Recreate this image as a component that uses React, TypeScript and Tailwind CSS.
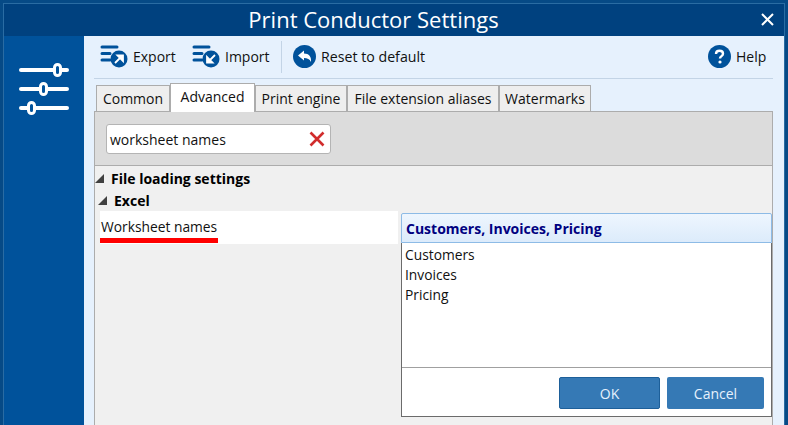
function ListIcon({ dir }: { dir: "out" | "in" }) {
  return (
    <svg width="28" height="23" viewBox="0 0 28 23" className="shrink-0">
      <path d="M2 2H17M2 8.5H10M2 15H10" stroke="#00529b" strokeWidth="3" strokeLinecap="round" fill="none" />
      <circle cx="19" cy="14" r="8.5" fill="#00529b" />
      {dir === "out" ? (
        <path d="M15 18L21.5 11.5M17.5 10.5H23V16Z" stroke="#fff" strokeWidth="1.8" fill="#fff" />
      ) : (
        <path d="M23 10L16.5 16.5M15 12V17.5H20.5Z" stroke="#fff" strokeWidth="1.8" fill="#fff" />
      )}
    </svg>
  );
}

function Slider({ pos }: { pos: number }) {
  return (
    <div className="relative h-[4px] w-[50px] rounded-full bg-white">
      <div
        className="absolute top-[-5px] h-[14px] w-[9px] rounded-full border-[3px] border-white bg-[#00529b]"
        style={{ left: pos }}
      />
    </div>
  );
}

function Tab({ label, width, active }: { label: string; width: string; active?: boolean }) {
  return active ? (
    <div className={`z-10 mb-[-1px] flex h-[29px] items-center justify-center border border-b-0 border-[#acacac] bg-white pb-[3px] ${width}`}>
      {label}
    </div>
  ) : (
    <div className={`flex h-[26px] items-center justify-center border border-b-0 border-[#acacac] bg-[#eeeeee] ${width}`}>
      {label}
    </div>
  );
}

function Triangle() {
  return (
    <svg width="9" height="9" viewBox="0 0 9 9" className="shrink-0">
      <path d="M0 9L9 0V9Z" fill="#404040" />
    </svg>
  );
}

export default function App() {
  return (
    <div
      className="h-[425px] w-[788px] overflow-hidden border-x-[3px] border-t-[3px] border-[#064a86] text-[14px] text-[#111111]"
      style={{ fontFamily: '"Open Sans", "Noto Sans", sans-serif' }}
    >
      <div className="flex h-full flex-col border-x border-t border-[#2a6ca3] bg-[#00417f]">
        <div className="relative flex h-[32px] shrink-0 items-center justify-center pb-[1px] pr-[41px] text-[22px] text-white">
          Print Conductor Settings
          <svg width="13" height="13" viewBox="0 0 13 13" className="absolute right-[10px] top-[9px]">
            <path d="M1 1L12 12M12 1L1 12" stroke="#fff" strokeWidth="2" />
          </svg>
        </div>
        <div className="flex min-h-0 flex-1">
          <div className="flex w-[80px] shrink-0 flex-col items-center gap-[15px] bg-[#00529b] pt-[32px]">
            <Slider pos={34} />
            <Slider pos={20} />
            <Slider pos={8} />
          </div>
          <div className="flex min-w-0 flex-1 flex-col bg-[#e6f1fd] pl-[10px] pr-[11px]">
            <div className="flex h-[43px] shrink-0 items-center border-b border-[#c3d4e6] pl-[6px] pb-[1px]">
              <ListIcon dir="out" />
              <span className="ml-[5px] w-[43px]">Export</span>
              <span className="ml-[16px]"><ListIcon dir="in" /></span>
              <span className="ml-[5px] w-[44px]">Import</span>
              <div className="ml-[12px] h-[32px] w-px bg-[#c3d4e6]" />
              <svg width="23" height="23" viewBox="0 0 23 23" className="ml-[11px] shrink-0">
                <circle cx="11.5" cy="11.5" r="11.5" fill="#00529b" />
                <path d="M5 10.5L11 5.5V8.5C16 8.5 18.5 11.5 18 17C16.5 14 14.5 13 11 13V15.5Z" fill="#fff" />
              </svg>
              <span className="ml-[5px] text-[14.2px]">Reset to default</span>
              <svg width="23" height="23" viewBox="0 0 23 23" className="ml-auto shrink-0">
                <circle cx="11.5" cy="11.5" r="11.5" fill="#00529b" />
                <path d="M8 9C8 6.8 9.5 5.8 11.5 5.8C13.5 5.8 15 7 15 8.8C15 11.2 12 11 12 13.5" stroke="#fff" strokeWidth="2.4" fill="none" />
                <circle cx="12" cy="17" r="1.6" fill="#fff" />
              </svg>
              <span className="ml-[5px] mr-[5px] w-[32px]">Help</span>
            </div>
            <div className="flex h-[32px] shrink-0 items-end pl-[2px]">
              <Tab label="Common" width="w-[74px]" />
              <Tab label="Advanced" width="w-[85px]" active />
              <Tab label="Print engine" width="w-[92px]" />
              <Tab label="File extension aliases" width="w-[152px]" />
              <Tab label="Watermarks" width="w-[92px]" />
            </div>
            <div className="flex min-h-0 flex-1 flex-col border-x border-t border-[#acacac] bg-[#f0f0f0]">
              <div className="flex h-[54px] shrink-0 items-start border-b border-[#acacac] bg-[#dcdcdc] pl-[11px] pt-[12px]">
                <div className="flex h-[30px] w-[225px] items-center justify-between rounded-[3px] border border-[#b4b4b4] bg-white pl-[3px] pr-[5px]">
                  <span className="pt-[1px]">worksheet names</span>
                  <svg width="16" height="16" viewBox="0 0 16 16">
                    <path d="M1.5 1.5L14.5 14.5M14.5 1.5L1.5 14.5" stroke="#d12c2c" strokeWidth="2.6" />
                  </svg>
                </div>
              </div>
              <div className="flex h-[24px] shrink-0 items-center gap-[7px] font-bold text-black">
                <Triangle />
                File loading settings
              </div>
              <div className="mb-[1px] flex h-[20px] shrink-0 items-center gap-[7px] pl-[3px] font-bold text-black">
                <Triangle />
                Excel
              </div>
              <div className="flex min-h-0 flex-1 items-start pl-[5px]">
                <div className="relative flex h-[33px] w-[298px] shrink-0 items-center bg-white pl-[1px] text-[13.8px]">
                  Worksheet names
                  <div className="absolute left-0 top-[27px] h-[5px] w-[118px] bg-[#ff0000]" />
                </div>
                <div className="ml-[3px] flex h-full min-w-0 flex-1 flex-col pt-[2px]">
                  <div className="flex h-[30px] shrink-0 items-center rounded-t-[2px] border border-[#8dbbe6] bg-gradient-to-b from-[#eef6fe] to-[#dcebfb] pl-[4px] font-bold text-[#000080]">
                    Customers, Invoices, Pricing
                  </div>
                  <div className="flex h-[174px] shrink-0 flex-col border border-t-0 border-[#6b6b6b] bg-white">
                    <div className="h-[125px] shrink-0 border-b border-[#a0a0a0] pl-[3px] pt-[2px] text-[13.8px] leading-[20px]">
                      <div>Customers</div>
                      <div>Invoices</div>
                      <div>Pricing</div>
                    </div>
                    <div className="flex flex-1 items-start justify-end gap-[7px] pr-[7px] pt-[9px] text-[#e6f1fd]">
                      <div className="flex h-[32px] w-[101px] items-center justify-center rounded-[2px] border border-[#1d5f99] bg-[#3579b5]">OK</div>
                      <div className="flex h-[32px] w-[97px] items-center justify-center rounded-[2px] bg-[#3579b5]">Cancel</div>
                    </div>
                  </div>
                </div>
              </div>
            </div>
          </div>
        </div>
      </div>
    </div>
  );
}
